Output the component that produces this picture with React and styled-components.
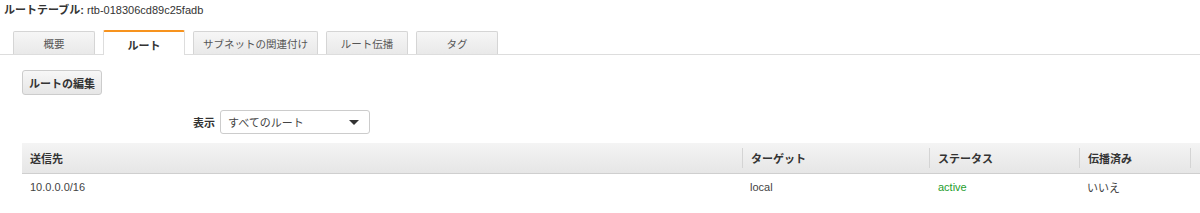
import React from "react";
import styled, { createGlobalStyle } from "styled-components";

const GlobalStyle = createGlobalStyle`
  body {
    margin: 0;
    background: #fff;
    font-family: "Liberation Sans", "Noto Sans CJK JP", sans-serif;
    font-size: 11px;
    color: #444;
  }
`;

const tabs = ["概要", "ルート", "サブネットの関連付け", "ルート伝播", "タグ"];

const columns = [
  { label: "送信先", width: "720px" },
  { label: "ターゲット", width: "187px" },
  { label: "ステータス", width: "150px" },
  { label: "伝播済み", width: "111px" },
];

const rows = [{ dest: "10.0.0.0/16", target: "local", status: "active", propagated: "いいえ" }];

const App = () => {
  return (
    <Page>
      <GlobalStyle />
      <Title>
        <strong>ルートテーブル:</strong> rtb-018306cd89c25fadb
      </Title>

      {/* tab bar */}
      <TabBar>
        {tabs.map((t) => (
          <Tab key={t} active={t === "ルート"}>
            {t}
          </Tab>
        ))}
      </TabBar>

      <Content>
        <EditButton>ルートの編集</EditButton>

        <FilterRow>
          <FilterLabel>表示</FilterLabel>
          <Select>
            <span>すべてのルート</span>
            <Caret />
          </Select>
        </FilterRow>

        <Table>
          <HeaderRow>
            {columns.map((c, i) => (
              <HeaderCell key={c.label} first={i === 0}>
                {c.label}
              </HeaderCell>
            ))}
            <HeaderCell />
          </HeaderRow>
          {rows.map((r) => (
            <Row key={r.dest}>
              <Cell>{r.dest}</Cell>
              <Cell>{r.target}</Cell>
              <Cell status>{r.status}</Cell>
              <Cell>{r.propagated}</Cell>
              <Cell />
            </Row>
          ))}
        </Table>
      </Content>
    </Page>
  );
};

// styled components

const Page = styled.div`
  width: 1200px;
  height: 213px;
  overflow: hidden;
`;

const Title = styled.div`
  padding: 3px 0 0 4px;
  height: 17px;
  line-height: 14px;
  color: #333;
  strong {
    font-weight: bold;
  }
`;

const TabBar = styled.div`
  display: flex;
  align-items: flex-end;
  gap: 8px;
  margin-top: 11px;
  padding-left: 13px;
  height: 23px;
  border-bottom: 1px solid #ddd;
`;

const Tab = styled.div`
  box-sizing: border-box;
  min-width: 82px;
  height: ${(p) => (p.active ? "25px" : "23px")};
  margin-bottom: ${(p) => (p.active ? "-1px" : "0")};
  padding: 0 9px;
  display: flex;
  align-items: center;
  justify-content: center;
  border: 1px solid ${(p) => (p.active ? "#ddd" : "#d5d5d5")};
  border-top: ${(p) => (p.active ? "2px solid #f7931e" : "1px solid #d5d5d5")};
  border-bottom: none;
  border-radius: 2px 2px 0 0;
  background: ${(p) => (p.active ? "#fff" : "linear-gradient(#f6f6f6, #e9e9e9)")};
  color: ${(p) => (p.active ? "#333" : "#555")};
  font-weight: ${(p) => (p.active ? "bold" : "normal")};
  font-size: ${(p) => (p.active ? "11px" : "10.5px")};
  padding-top: ${(p) => (p.active ? "2px" : "0")};
`;

const Content = styled.div`
  padding-left: 22px;
`;

const EditButton = styled.button`
  margin-top: 15px;
  width: 80px;
  height: 25px;
  border: 1px solid #ccc;
  border-radius: 3px;
  background: linear-gradient(#f7f7f7, #e6e6e6);
  font-family: inherit;
  font-size: 11px;
  font-weight: bold;
  color: #333;
  padding: 0;
`;

const FilterRow = styled.div`
  display: flex;
  align-items: center;
  gap: 5px;
  margin-top: 15px;
  padding-left: 171px;
`;

const FilterLabel = styled.span`
  font-weight: bold;
  color: #333;
`;

const Select = styled.div`
  box-sizing: border-box;
  width: 150px;
  height: 24px;
  border: 1px solid #ccc;
  border-radius: 3px;
  display: flex;
  align-items: center;
  justify-content: space-between;
  padding: 0 10px 0 7px;
  color: #444;
`;

const Caret = styled.span`
  width: 0;
  height: 0;
  border-left: 5px solid transparent;
  border-right: 5px solid transparent;
  border-top: 5px solid #333;
`;

const Table = styled.div`
  margin-top: 9px;
`;

const gridCols = columns.map((c) => c.width).join(" ") + " 1fr";

const HeaderRow = styled.div`
  display: grid;
  grid-template-columns: ${gridCols};
  height: 30px;
  background: linear-gradient(#f4f4f4, #e6e6e6);
  border-bottom: 1px solid #cfcfcf;
`;

const HeaderCell = styled.div`
  display: flex;
  align-items: center;
  padding-left: 8px;
  font-weight: bold;
  color: #333;
  border-left: ${(p) => (p.first ? "none" : "1px solid #d4d4d4")};
  margin: 5px 0;
`;

const Row = styled.div`
  display: grid;
  grid-template-columns: ${gridCols};
  height: 26px;
`;

const Cell = styled.div`
  display: flex;
  align-items: center;
  padding-left: ${(p) => (p.status ? "9px" : "8px")};
  color: ${(p) => (p.status ? "#1f9d2d" : "#444")};
`;

export default App;
